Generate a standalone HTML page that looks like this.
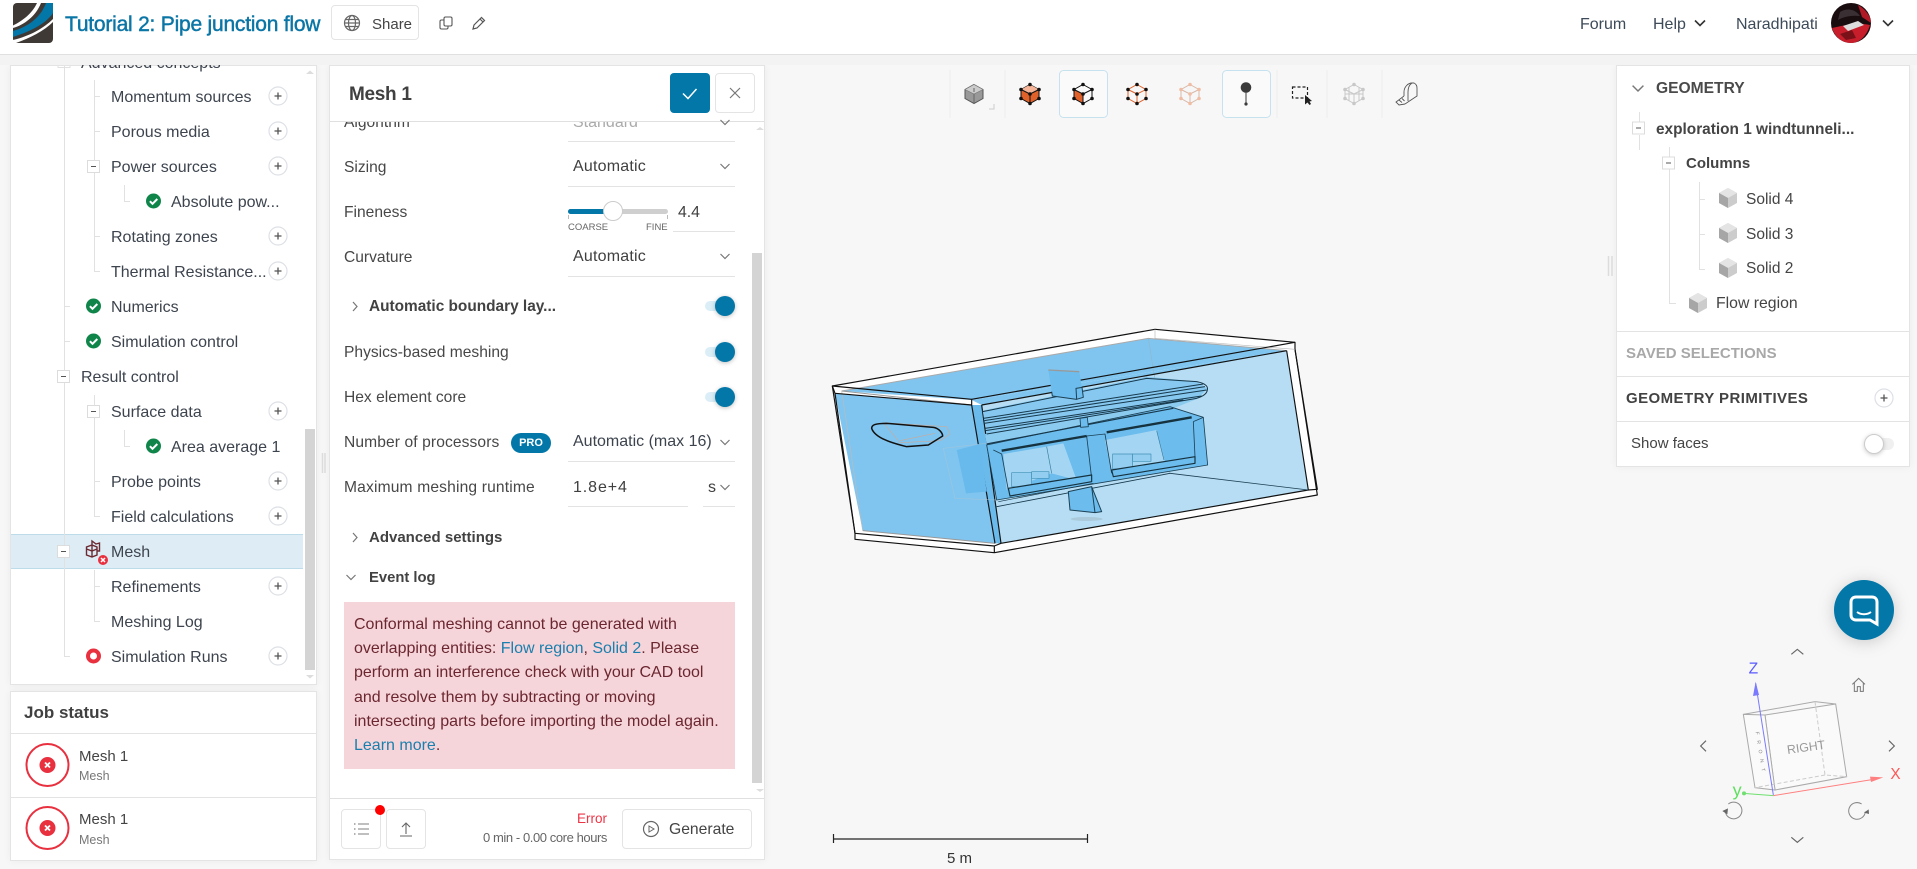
<!DOCTYPE html>
<html><head><meta charset="utf-8"><title>Tutorial 2: Pipe junction flow</title>
<style>
html,body{margin:0;padding:0}
body{width:1917px;height:864px;overflow:hidden;position:relative;background:#f7f7f7;font-family:"Liberation Sans",sans-serif;font-size:16px;color:#404040}
.p{position:absolute;background:#fff;border:1px solid #e4e4e4;box-sizing:border-box;z-index:1;box-shadow:0 0 8px rgba(0,0,0,.05)}
.t{position:absolute;line-height:20px;white-space:nowrap;z-index:2;margin-top:1px}
.top{z-index:6}
.r{color:#3d444e;margin-top:2px}
.b{font-weight:700}
.l{color:#474747;font-size:15.6px;margin-top:2px}
.h{position:absolute;z-index:4;background:#fff}
.btn{position:absolute;box-sizing:border-box;background:#fff;border:1px solid #e4e4e4;border-radius:4px;z-index:4}
.u{position:absolute;height:1px;background:#e3e3e3;z-index:2}
svg.o{position:absolute;left:0;top:0;z-index:5}
a{color:#1a7fae;text-decoration:none}
</style></head><body>

<!-- top bar -->
<div class="h" style="left:0;top:0;width:1917px;height:54px;border-bottom:1px solid #e0e0e0;box-sizing:content-box;z-index:4"></div>
<div class="h" style="left:0;top:55px;width:1917px;height:10px;background:#f3f3f3;z-index:3"></div>
<div class="t top" style="left:65px;top:14px;color:#0b76a6;font-size:21px;letter-spacing:-.22px;-webkit-text-stroke:.45px #0b76a6">Tutorial 2: Pipe junction flow</div>
<div class="btn" style="left:331px;top:5px;width:88px;height:35px"></div>
<div class="t top" style="left:372px;top:14px;font-size:15px;color:#444">Share</div>
<div class="t top" style="left:1580px;top:14px;font-size:16px;color:#3d4a58">Forum</div>
<div class="t top" style="left:1653px;top:14px;font-size:16px;color:#3d4a58">Help</div>
<div class="t top" style="left:1736px;top:14px;font-size:16px;color:#3d4a58">Naradhipati</div>

<!-- left tree panel -->
<div class="p" style="left:10px;top:65px;width:307px;height:620px"></div>
<div style="position:absolute;left:11px;top:534px;width:292px;height:35px;background:#deedf5;border-top:1px solid #bcdcea;border-bottom:1px solid #bcdcea;box-sizing:border-box;z-index:1"></div>
<div style="position:absolute;left:305px;top:429px;width:10px;height:241px;background:#d4d4d4;z-index:2"></div>

<div class="t r" style="left:81px;top:52px">Advanced concepts</div>
<div class="t r" style="left:111px;top:86px">Momentum sources</div>
<div class="t r" style="left:111px;top:121px">Porous media</div>
<div class="t r" style="left:111px;top:156px">Power sources</div>
<div class="t r" style="left:171px;top:191px">Absolute pow...</div>
<div class="t r" style="left:111px;top:226px">Rotating zones</div>
<div class="t r" style="left:111px;top:261px">Thermal Resistance...</div>
<div class="t r" style="left:111px;top:296px">Numerics</div>
<div class="t r" style="left:111px;top:331px">Simulation control</div>
<div class="t r" style="left:81px;top:366px">Result control</div>
<div class="t r" style="left:111px;top:401px">Surface data</div>
<div class="t r" style="left:171px;top:436px">Area average 1</div>
<div class="t r" style="left:111px;top:471px">Probe points</div>
<div class="t r" style="left:111px;top:506px">Field calculations</div>
<div class="t r" style="left:111px;top:541px">Mesh</div>
<div class="t r" style="left:111px;top:576px">Refinements</div>
<div class="t r" style="left:111px;top:611px">Meshing Log</div>
<div class="t r" style="left:111px;top:646px">Simulation Runs</div>

<!-- job status -->
<div class="p" style="left:10px;top:691px;width:307px;height:170px"></div>
<div class="u" style="left:11px;top:733px;width:305px"></div>
<div class="u" style="left:11px;top:797px;width:305px"></div>
<div class="t b" style="left:24px;top:702px;font-size:17px;color:#404040">Job status</div>
<div class="t" style="left:79px;top:746px;font-size:15px;color:#444">Mesh 1</div>
<div class="t" style="left:79px;top:765px;font-size:12.5px;color:#777">Mesh</div>
<div class="t" style="left:79px;top:809px;font-size:15px;color:#444">Mesh 1</div>
<div class="t" style="left:79px;top:829px;font-size:12.5px;color:#777">Mesh</div>

<!-- mesh panel -->
<div class="p" style="left:329px;top:65px;width:436px;height:795px"></div>
<div class="t l" style="left:344px;top:111px">Algorithm</div>
<div class="t" style="left:573px;top:112px;font-size:16px;color:#aaa">Standard</div>
<div class="h" style="left:330px;top:66px;width:434px;height:55px;border-bottom:1px solid #e0e0e0;z-index:3"></div>
<div class="t b top" style="left:349px;top:84px;font-size:19px;letter-spacing:-.3px;color:#404040">Mesh 1</div>
<div style="position:absolute;left:670px;top:73px;width:40px;height:40px;background:#0277a8;border-radius:4px;z-index:4"></div>
<div class="btn" style="left:715px;top:73px;width:40px;height:40px"></div>

<div style="position:absolute;left:752px;top:253px;width:10px;height:530px;background:#d4d4d4;z-index:2"></div>

<div class="t l" style="left:344px;top:156px">Sizing</div>
<div class="t" style="left:573px;top:156px;font-size:16px;letter-spacing:.2px">Automatic</div>
<div class="u" style="left:568px;top:141px;width:167px"></div>
<div class="u" style="left:568px;top:186px;width:167px"></div>
<div class="t l" style="left:344px;top:201px">Fineness</div>
<div class="t" style="left:568px;top:217px;font-size:9.5px;color:#666">COARSE</div>
<div class="t" style="left:646px;top:217px;font-size:9.5px;color:#666">FINE</div>
<div class="t" style="left:678px;top:202px;font-size:15.8px">4.4</div>
<div class="u" style="left:673px;top:231px;width:62px"></div>
<div class="t l" style="left:344px;top:246px">Curvature</div>
<div class="t" style="left:573px;top:246px;font-size:16px;letter-spacing:.2px">Automatic</div>
<div class="u" style="left:568px;top:276px;width:167px"></div>
<div class="t b" style="left:369px;top:296px;font-size:15.4px;color:#424242">Automatic boundary lay...</div>
<div class="t l" style="left:344px;top:341px">Physics-based meshing</div>
<div class="t l" style="left:344px;top:386px">Hex element core</div>
<div class="t l" style="left:344px;top:431px;letter-spacing:.1px">Number of processors</div>
<div style="position:absolute;left:511px;top:433px;width:40px;height:20px;border-radius:10px;background:#0277a8;color:#fff;font-size:11px;font-weight:700;line-height:20px;text-align:center;z-index:2">PRO</div>
<div class="t" style="left:573px;top:431px;font-size:16px;color:#3d444e">Automatic (max 16)</div>
<div class="u" style="left:568px;top:461px;width:167px"></div>
<div class="t l" style="left:344px;top:476px;letter-spacing:.16px">Maximum meshing runtime</div>
<div class="t" style="left:573px;top:477px;font-size:16px;letter-spacing:.9px">1.8e+4</div>
<div class="t" style="left:708px;top:477px;font-size:16px">s</div>
<div class="u" style="left:568px;top:506px;width:120px"></div>
<div class="u" style="left:703px;top:506px;width:32px"></div>
<div class="t b" style="left:369px;top:527px;font-size:15px;color:#424242">Advanced settings</div>
<div class="t b" style="left:369px;top:567px;font-size:14.8px;color:#424242">Event log</div>

<div style="position:absolute;left:344px;top:602px;width:391px;height:167px;background:#f5d5d9;z-index:1"></div>
<div class="t" style="left:354px;top:614px;font-size:16px;color:#6b2630">Conformal meshing cannot be generated with</div>
<div class="t" style="left:354px;top:638px;font-size:16px;color:#6b2630">overlapping entities: <a>Flow region</a>, <a>Solid 2</a>. Please</div>
<div class="t" style="left:354px;top:662px;font-size:16px;color:#6b2630">perform an interference check with your CAD tool</div>
<div class="t" style="left:354px;top:687px;font-size:16px;color:#6b2630">and resolve them by subtracting or moving</div>
<div class="t" style="left:354px;top:711px;font-size:16px;color:#6b2630">intersecting parts before importing the model again.</div>
<div class="t" style="left:354px;top:735px;font-size:16px;color:#6b2630"><a>Learn more</a>.</div>

<div class="u" style="left:330px;top:798px;width:434px;background:#e0e0e0"></div>
<div class="btn" style="left:341px;top:809px;width:40px;height:40px;z-index:2"></div>
<div class="btn" style="left:386px;top:809px;width:40px;height:40px;z-index:2"></div>
<div class="t" style="right:1310px;top:808px;font-size:13.5px;color:#ee3344">Error</div>
<div class="t" style="right:1310px;top:827px;font-size:13px;color:#666;letter-spacing:-.42px">0 min - 0.00 core hours</div>
<div class="btn" style="left:622px;top:809px;width:130px;height:40px;z-index:2"></div>
<div class="t" style="left:669px;top:819px;font-size:15.7px;color:#444">Generate</div>

<!-- right panel -->
<div class="p" style="left:1616px;top:65px;width:294px;height:402px"></div>
<div class="t" style="left:1656px;top:78px;font-size:15.6px;font-weight:700;color:#4a4a4a">GEOMETRY</div>
<div class="t b" style="left:1656px;top:119px;font-size:15.4px;color:#444">exploration 1 windtunneli...</div>
<div class="t b" style="left:1686px;top:153px;font-size:15px;color:#444">Columns</div>
<div class="t" style="left:1746px;top:189px;font-size:15.5px;color:#444">Solid 4</div>
<div class="t" style="left:1746px;top:224px;font-size:15.5px;color:#444">Solid 3</div>
<div class="t" style="left:1746px;top:258px;font-size:15.5px;color:#444">Solid 2</div>
<div class="t" style="left:1716px;top:293px;font-size:15.8px;color:#444">Flow region</div>
<div class="u" style="left:1617px;top:331px;width:292px"></div>
<div class="t b" style="left:1626px;top:343px;font-size:15px;color:#a8a8a8">SAVED SELECTIONS</div>
<div class="u" style="left:1617px;top:376px;width:292px"></div>
<div class="t b" style="left:1626px;top:388px;font-size:15px;color:#424242;letter-spacing:.43px">GEOMETRY PRIMITIVES</div>
<div class="u" style="left:1617px;top:421px;width:292px"></div>
<div class="t" style="left:1631px;top:433px;font-size:15px;color:#444">Show faces</div>

<!-- scale label -->
<div class="t" style="left:947px;top:848px;font-size:15px;color:#333">5 m</div>

<svg class="o" width="1917" height="864" viewBox="0 0 1917 864" xmlns="http://www.w3.org/2000/svg" fill="none">
<defs>
<g id="plus"><circle r="9" fill="#fff" stroke="#dde0e6" stroke-width="1.2"/><path d="M-3.5 0H3.5M0-3.5V3.5" stroke="#555" stroke-width="1.3"/></g>
<g id="ok"><circle r="7.5" fill="#10854a"/><path d="M-3.6 .2L-1 2.8 3.8-2" stroke="#fff" stroke-width="2"/></g>
<g id="tog"><rect x="-6" y="-6" width="12" height="12" fill="#fff" stroke="#dcdcdc"/><path d="M-2.5 0H2.5" stroke="#555"/></g>
<g id="chev"><path d="M-4.5-2L0 2.5 4.5-2" stroke="#777" stroke-width="1.2"/></g>
<g id="chevd"><path d="M-5-2.500L0 2.500 5-2.500" stroke="#333" stroke-width="1.600"/></g>
<g id="tg"><rect x="-20" y="-5" width="22" height="10" rx="5" fill="#dbeef7"/><circle r="10" fill="#0277a8" style="filter:drop-shadow(0 1px 2px rgba(0,0,0,.25))"/></g>
<g id="cube"><path d="M0-10L9-5V5L0 10-9 5V-5Z" fill="#ccc"/><path d="M0-10L9-5 0 0-9-5Z" fill="#e4e4e4"/><path d="M-9-5L0 0V10L-9 5Z" fill="#a6a6a6"/></g>
<g id="jobx"><circle r="21" fill="#fff" stroke="#e8303f" stroke-width="2"/><circle r="8" fill="#e8303f"/><path d="M-2.5-2.5L2.5 2.5M2.5-2.5L-2.5 2.5" stroke="#fff" stroke-width="1.8"/></g>
</defs>

<!-- logo -->
<rect x="13" y="3" width="40" height="40" rx="4" fill="#3f3935"/>
<path d="M46 3H53V13C45 25 28 32 13 37V31C28 27 41 17 46 3Z" fill="#0277a8"/>
<path d="M37 3H41C36 16 24 25 13 28V25.500C22 21 32 14 37 3Z" fill="#fff"/>
<path d="M13 40C30 36 44 28 53 19V22C44 31 30 38 16 43H13Z" fill="#fff"/>

<!-- header icons -->
<g stroke="#666" stroke-width="1.2"><circle cx="352" cy="23" r="7.5"/><ellipse cx="352" cy="23" rx="3.500" ry="7.5"/><path d="M344.500 23H359.500M345.500 19.500H358.500M345.500 26.500H358.500"/></g>
<g stroke="#555" stroke-width="1.1"><rect x="440" y="20" width="8" height="9" rx="1.500" fill="#fff"/><rect x="444" y="17" width="8" height="9" rx="1.500" fill="#fff"/></g>
<path d="M473 29L474 25 481.500 17.500 484.500 20.500 477 28 473 29ZM480 19L483 22" stroke="#555" stroke-width="1.2"/>
<use href="#chevd" transform="translate(1700,23)"/>
<use href="#chevd" transform="translate(1888,23)"/>
<circle cx="1851" cy="23" r="20" fill="#1a0d10"/>
<path d="M1832 28C1842 26 1856 22 1870 25 1866 38 1858 43 1851 43 1842 43 1835 37 1832 28Z" fill="#c81e2c"/>
<path d="M1858 5C1865 9 1871 16 1871 23L1862 17Z" fill="#b01a26"/>
<path d="M1843 26L1858 21 1864 25 1848 31Z" fill="#ddd"/>
<path d="M1840 34L1852 30 1856 38 1846 40Z" fill="#7a1018"/>
<path d="M1840 12C1848 7 1856 10 1860 16 1850 15 1843 17 1838 20Z" fill="#3a3034"/>

<!-- left tree lines -->
<g stroke="#e1e1e1">
<path d="M64.500 66V656.500H70M64.500 306.500H70M64.500 341.500H70"/>
<path d="M94.500 80V271.500H100M94.500 96.500H100M94.500 131.500H100M94.500 236.500H100"/>
<path d="M124.500 185V201.500H130"/>
<path d="M94.500 395V516.500H100M94.500 481.500H100"/>
<path d="M124.500 430V446.500H130"/>
<path d="M94.500 570V621.500H100M94.500 586.500H100"/>
<path d="M58 66V67.500H70V66"/>
</g>
<use href="#tog" transform="translate(93.500,166.500)"/>
<use href="#tog" transform="translate(63.500,376.500)"/>
<use href="#tog" transform="translate(93.500,411.500)"/>
<use href="#tog" transform="translate(63.500,551.500)"/>
<use href="#plus" transform="translate(278,96)"/>
<use href="#plus" transform="translate(278,131)"/>
<use href="#plus" transform="translate(278,166)"/>
<use href="#plus" transform="translate(278,236)"/>
<use href="#plus" transform="translate(278,271)"/>
<use href="#plus" transform="translate(278,411)"/>
<use href="#plus" transform="translate(278,481)"/>
<use href="#plus" transform="translate(278,516)"/>
<use href="#plus" transform="translate(278,586)"/>
<use href="#plus" transform="translate(278,656)"/>
<use href="#ok" transform="translate(153.500,201)"/>
<use href="#ok" transform="translate(93.500,306)"/>
<use href="#ok" transform="translate(93.500,341)"/>
<use href="#ok" transform="translate(153.500,446)"/>
<circle cx="93.500" cy="656" r="5.500" fill="#fff" stroke="#e8303f" stroke-width="4"/>
<path d="M86.500 555V547L92 545 97 547V555L92 557ZM92 545V557M86.500 549L92 551 97 549M92 545V541L96 544 99.500 543V551H97" stroke="#6b2a33" stroke-width="1.400"/>
<circle cx="103" cy="560" r="5" fill="#e8303f"/><path d="M101 558L105 562M105 558L101 562" stroke="#fff" stroke-width="1.500"/>
<path d="M306 74H314L310 70.500Z M306 675H314L310 678.500Z" fill="#ddd"/>
<use href="#jobx" transform="translate(47.500,765)"/>
<use href="#jobx" transform="translate(47.500,828)"/>
<path d="M322.500 453V473M325 453V473" stroke="#dcdcdc" stroke-width="1.500"/>

<!-- mesh panel icons -->
<path d="M683 93.500L688 98.500 696.500 89" stroke="#fff" stroke-width="1.500"/>
<path d="M730 88L740 98M740 88L730 98" stroke="#777" stroke-width="1.200"/>
<use href="#chev" transform="translate(725,122)"/>
<use href="#chev" transform="translate(725,166)"/>
<use href="#chev" transform="translate(725,256)"/>
<use href="#chev" transform="translate(725,442)"/>
<use href="#chev" transform="translate(725,487)"/>
<path d="M756 130H764L760 127Z M756 789H764L760 792Z" fill="#ddd"/>
<!-- slider -->
<rect x="568" y="209" width="100" height="5" rx="2.500" fill="#cfcfcf"/>
<rect x="568" y="209" width="45" height="5" rx="2.500" fill="#0277a8"/>
<path d="M568.500 215V219M667.500 215V219" stroke="#bbb"/>
<circle cx="613" cy="211" r="9.500" fill="#fff" stroke="#ccc"/>
<use href="#tg" transform="translate(725,306)"/>
<use href="#tg" transform="translate(725,352)"/>
<use href="#tg" transform="translate(725,397)"/>
<path d="M353 302L357 306.500 353 311" stroke="#777" stroke-width="1.200"/>
<path d="M353 533L357 537.500 353 542" stroke="#777" stroke-width="1.200"/>
<use href="#chev" transform="translate(351,577)"/>
<!-- bottom -->
<circle cx="380" cy="810" r="5" fill="#f00"/>
<path d="M358 824H369M358 829H369M358 834H369" stroke="#aaa" stroke-width="1.400"/>
<path d="M354 824H355.500M354 829H355.500M354 834H355.500" stroke="#999" stroke-width="1.400"/>
<path d="M406 834V823M402 827L406 823 410 827M400 836H412" stroke="#666" stroke-width="1.100"/>
<circle cx="651" cy="829" r="7.500" stroke="#666" stroke-width="1.200"/><path d="M649 826L654 829 649 832Z" stroke="#666"/>

<!-- toolbar -->
<g stroke="#ececec"><path d="M950 70V118M1005 70V118M1277 70V118M1327 70V118M1382 70V118"/></g>
<rect x="1059.500" y="70.500" width="48" height="47" rx="4" fill="#fafafa" stroke="#c6e2ef"/>
<rect x="1222.500" y="70.500" width="48" height="47" rx="4" fill="#fafafa" stroke="#c6e2ef"/>
<g transform="translate(974,94)"><path d="M0-9.500L9-4.500V4.500L0 9.500-9 4.500V-4.500Z" fill="#999" stroke="#555"/><path d="M0-9.500L9-4.500 0 0-9-4.500Z" fill="#ccc" stroke="#777" stroke-width=".6"/><path d="M0 0V9.500M0-6V-2" stroke="#666"/></g>
<path d="M989 109H994V104" stroke="#ccc"/>
<g transform="translate(1030,94)"><path d="M0-9.500L9-4.500V4.500L0 9.500-9 4.500V-4.500Z" fill="#e0622a" stroke="#111"/><path d="M0-9.500L9-4.500 0 0-9-4.500Z" fill="#f5b497"/><path d="M0 0V9.500M0 0L9-4.500M0 0L-9-4.500" stroke="#111"/><g fill="#111"><circle cy="-9.500" r="1.800"/><circle cx="9" cy="-4.500" r="1.800"/><circle cx="9" cy="4.500" r="1.800"/><circle cy="9.500" r="1.800"/><circle cx="-9" cy="4.500" r="1.800"/><circle cx="-9" cy="-4.500" r="1.800"/><circle r="1.800"/></g></g>
<g transform="translate(1083,94)"><path d="M-9-4.500L0 0V9.500L-9 4.500Z" fill="#e0622a"/><path d="M0-9.500L9-4.500V4.500L0 9.500-9 4.500V-4.500ZM0 0V9.500M0 0L9-4.500M0 0L-9-4.500" stroke="#111"/><g fill="#111"><circle cy="-9.500" r="1.800"/><circle cx="9" cy="-4.500" r="1.800"/><circle cx="9" cy="4.500" r="1.800"/><circle cy="9.500" r="1.800"/><circle cx="-9" cy="4.500" r="1.800"/><circle cx="-9" cy="-4.500" r="1.800"/><circle r="1.800"/></g></g>
<g transform="translate(1137,94)"><path d="M0-9.500L9-4.500V4.500L0 9.500-9 4.500V-4.500ZM0 0V9.500M0 0L9-4.500M0 0L-9-4.500" stroke="#e0622a"/><g fill="#111"><circle cy="-9.500" r="1.800"/><circle cx="9" cy="-4.500" r="1.800"/><circle cx="9" cy="4.500" r="1.800"/><circle cy="9.500" r="1.800"/><circle cx="-9" cy="4.500" r="1.800"/><circle cx="-9" cy="-4.500" r="1.800"/><circle r="1.800"/></g></g>
<g transform="translate(1190,94)"><path d="M0-9.500L9-4.500V4.500L0 9.500-9 4.500V-4.500ZM0 0V9.500M0 0L9-4.500M0 0L-9-4.500" stroke="#d8b9aa"/><g fill="#f0bda4"><circle cy="-9.500" r="1.800"/><circle cx="9" cy="-4.500" r="1.800"/><circle cx="9" cy="4.500" r="1.800"/><circle cy="9.500" r="1.800"/><circle cx="-9" cy="4.500" r="1.800"/><circle cx="-9" cy="-4.500" r="1.800"/><circle r="1.800"/></g></g>
<circle cx="1246" cy="87.500" r="5.300" fill="#3a3a3a"/><path d="M1246 92V104" stroke="#3a3a3a"/><circle cx="1246" cy="104" r="1.600" fill="#3a3a3a"/>
<rect x="1292.500" y="87" width="15" height="11" stroke="#222" stroke-width="1.200" stroke-dasharray="3 2"/>
<path d="M1305 95V104.500L1307.500 102.500 1309.500 105 1311 104 1309.500 101.500 1312 101Z" fill="#222"/>
<g transform="translate(1354,94)" stroke="#c8c8c8"><path d="M0-9.500L9-4.500V4.500L0 9.500-9 4.500V-4.500ZM0 0V9.500M0 0L9-4.500M0 0L-9-4.500M-5-7L-5 7M5-7V7M-9 0L9 0"/><g fill="#c8c8c8" stroke="none"><circle cy="-9.500" r="1.800"/><circle cx="9" cy="-4.500" r="1.800"/><circle cx="9" cy="4.500" r="1.800"/><circle cy="9.500" r="1.800"/><circle cx="-9" cy="4.500" r="1.800"/><circle cx="-9" cy="-4.500" r="1.800"/></g></g>
<path d="M1404 96V92C1404 87 1408 83 1412 83H1414C1416 84 1417 86 1417 88V96L1405 104M1412 83C1409 85 1408 89 1408 92V101M1404 96L1396 102 1399 105 1405 104M1399 100L1402 102.500M1402 98.500L1404.500 101" stroke="#555" stroke-width=".9"/>

<!-- 3D model -->
<g transform="translate(800,310) scale(.33333)" stroke-linejoin="round">
<path d="M97 228L1065 58 1485 97V118L1552 555 583 728 165 688V670Z" fill="#fff" stroke="#111" stroke-width="3.500"/>
<path d="M125 243L1045 85 1460 122 515 270Z" fill="#80c5ef"/>
<path d="M105 250L515 285 585 700 188 662Z" fill="#80c5ef"/>
<path d="M545 285L1460 122 1525 540 603 700Z" fill="#b6ddf3"/>
<path d="M515 285L545 285 603 700 585 700Z" fill="#6abaeb"/>
<path d="M545 285L515 270 1460 122Z" fill="#80c5ef"/>
<path d="M125 243L1045 85 1460 122" stroke="#aaa" stroke-width="3"/>
<path d="M1065 58V85L1485 118" stroke="#bbb" stroke-width="2"/>
<path d="M125 243L515 285M188 662L585 700" stroke="#999" stroke-width="3"/>
<path d="M125 243L188 662" stroke="#bbb" stroke-width="2"/>
<path d="M1045 85L1110 490" stroke="#8fb8cf" stroke-width="2"/>
<!-- frame lines -->
<g stroke="#111" stroke-width="3.500">
<path d="M97 228L105 250 515 285V268L97 228"/>
<path d="M515 268L1485 97"/>
<path d="M545 285L1460 122"/>
<path d="M1460 122L1525 540 1552 538 1485 118"/>
<path d="M515 285L585 700M545 285L603 700"/>
<path d="M603 700L1525 540"/>
<path d="M105 250L165 670 583 708V728M583 708L603 700"/>
<path d="M1110 490L1525 540" stroke="#1c3e52" stroke-width="2.500"/>
</g>
<!-- ghost box -->
<path d="M430 415L560 400 590 570 465 565Z" stroke="#a8c5d5" stroke-width="2" opacity=".7"/>
<path d="M470 420L540 402 560 545 498 550Z" fill="#68baed"/>
<!-- oval -->
<path d="M250 338L440 350 450 372 420 392 300 398Z" stroke="#c8aa9c" stroke-width="2"/>
<path d="M215 355C215 345 225 340 260 340L400 352C415 354 428 368 428 378L385 405 320 410C280 400 225 385 215 355Z" stroke="#111" stroke-width="4.500"/>
<path d="M300 392L405 370" stroke="#c8aa9c" stroke-width="2"/>
<!-- wing -->
<path d="M555 372L1195 265 1120 295 560 405Z" fill="#8ccbf0"/>
<path d="M548 302L1040 200 1190 215 1222 235 1195 265 560 372Z" fill="#86c8f0"/>
<g stroke="#17384b" stroke-width="3">
<path d="M548 305L1040 205 1190 215C1215 220 1225 228 1222 240 1220 255 1200 262 1190 265L560 372"/>
<path d="M550 325L1210 222M552 340L1220 240M555 355L1205 258M553 332L1215 230M556 362L1150 270"/>
</g>
<!-- lower body -->
<path d="M560 405L1110 290 1210 322 1223 465 590 570Z" fill="#6cbced" stroke="#1c4054" stroke-width="2.500"/>
<path d="M610 432L740 410 755 490 620 540Z" fill="#a4d6f3"/>
<path d="M740 410L790 400 830 510 755 490Z" fill="#a4d6f3"/>
<path d="M915 390L1070 360 1095 455 935 490Z" fill="#a4d6f3"/>
<path d="M580 420L605 432 625 540M860 378L875 505M860 378L915 372 935 490M1180 335L1185 440M1180 335L1210 322" stroke="#1c4054" stroke-width="2.500"/>
<path d="M740 410L755 490M1070 362L1092 450" stroke="#3a7d9e" stroke-width="2"/>
<path d="M605 422L860 378M920 367L1175 322" stroke="#16323f" stroke-width="7"/>
<path d="M560 402L830 350 1120 295" stroke="#17384b" stroke-width="3.500"/>
<!-- components -->
<g stroke="#3f8fb5" stroke-width="2" fill="#93cdf0"><rect x="635" y="488" width="60" height="42"/><rect x="695" y="485" width="52" height="20"/><rect x="938" y="432" width="60" height="45"/><rect x="998" y="432" width="55" height="22"/></g>
<path d="M625 535L875 495V515L630 558Z" fill="#6cbced" stroke="#16323f" stroke-width="3.500"/>
<path d="M935 480L1185 440V460L940 500Z" fill="#6cbced" stroke="#16323f" stroke-width="3.500"/>
<path d="M590 590L1110 490" stroke="#17384b" stroke-width="2.500"/>
<path d="M595 575L880 520" stroke="#17384b" stroke-width="2"/>
<!-- blocks -->
<path d="M805 545L875 530 905 605 885 608 810 600Z" fill="#6cbced" stroke="#1c4054" stroke-width="3"/><path d="M875 530L885 608" stroke="#1c4054" stroke-width="3"/>
<path d="M745 180L838 185 850 262 830 268 757 258Z" fill="#6cbced"/><path d="M745 180L838 185" stroke="#999" stroke-width="4"/><path d="M755 245L757 258 830 268 850 262 846 232 828 235 830 268" stroke="#1c4054" stroke-width="3"/>
<path d="M840 325L862 322 865 350 842 352Z" fill="#6cbced" stroke="#1c4054" stroke-width="2.500"/>
<ellipse cx="860" cy="627" rx="48" ry="6" fill="#a8c4d4" opacity=".8"/>
</g>

<!-- scale bar -->
<path d="M833.500 834V843M1087.500 834V843M833 839H1088" stroke="#222" stroke-width="1.200"/>

<!-- right panel icons -->
<path d="M1608.500 256V276M1612 256V276" stroke="#dcdcdc" stroke-width="1.500"/>
<use href="#chev" transform="translate(1638,88) scale(1.2)"/>
<g stroke="#e1e1e1"><path d="M1639.500 112V122M1639.500 135V150"/><path d="M1669.500 147V303.500H1676"/><path d="M1699.500 182V269.500H1705M1699.500 199.500H1705M1699.500 234.500H1705"/></g>
<use href="#tog" transform="translate(1638.500,128)"/>
<use href="#tog" transform="translate(1668.500,163)"/>
<use href="#cube" transform="translate(1728,198)"/>
<use href="#cube" transform="translate(1728,233)"/>
<use href="#cube" transform="translate(1728,268)"/>
<use href="#cube" transform="translate(1698,303)"/>
<use href="#plus" transform="translate(1884,398)"/>
<rect x="1872" y="438" width="22" height="12" rx="6" fill="#f0f0f0"/>
<circle cx="1874" cy="444" r="9.500" fill="#fff" stroke="#ccc" style="filter:drop-shadow(0 1px 2px rgba(0,0,0,.2))"/>

<!-- chat -->
<circle cx="1864" cy="610" r="30" fill="#0277a8" style="filter:drop-shadow(0 2px 8px rgba(0,0,0,.18))"/>
<path d="M1856 597H1872C1875 597 1877 599 1877 602V624L1870 620H1856C1853 620 1851 618 1851 615V602C1851 599 1853 597 1856 597Z" stroke="#fff" stroke-width="3"/>
<path d="M1857 612C1861 615 1867 615 1871 612" stroke="#fff" stroke-width="2"/>

<!-- axis widget -->
<g transform="translate(1660,630) scale(.33333)">
<path d="M394 73L412 58 430 73M394 622L412 637 430 622M138 332L122 348 138 364M687 332L703 348 687 364" stroke="#666" stroke-width="3.500"/>
<path d="M577 163L596 145 615 163M583 158V184H592V170H601V184H610V158" stroke="#777" stroke-width="3"/>
<path d="M205 522A25 25 0 1 1 196 545" stroke="#888" stroke-width="3"/><path d="M187 543L204 535 202 553Z" fill="#666"/>
<path d="M615 522A25 25 0 1 0 626 545" stroke="#888" stroke-width="3" transform="translate(-10,0)"/><path d="M626 538L612 548 627 552Z" fill="#666"/>
<path d="M315 255L527 222 560 440 345 480Z" fill="#fafafa" stroke="#aaa" stroke-width="3"/>
<path d="M250 253L315 255 345 480 285 473Z" fill="#fafafa" stroke="#aaa" stroke-width="3"/>
<path d="M250 253L465 215 527 222" stroke="#aaa" stroke-width="3"/>
<path d="M465 215L495 435 560 440M495 435L285 473" stroke="#ccc" stroke-width="3" stroke-dasharray="12 7"/>
<text transform="translate(383,372) rotate(-8)" font-family="Liberation Sans, sans-serif" font-size="37" fill="#999">RIGHT</text>
<text transform="translate(287,306) rotate(81)" font-family="Liberation Sans, sans-serif" font-size="15" fill="#888" textLength="120">FRONT</text>
<path d="M340 495L287 160" stroke="#7a7aff" stroke-width="3"/><path d="M287 155L279 198 297 195Z" fill="#7a7aff"/>
<path d="M340 497L640 448" stroke="#ff8080" stroke-width="3"/><path d="M670 442L630 440 633 456Z" fill="#ff8080"/>
<path d="M340 497L250 490" stroke="#6fe06f" stroke-width="3"/><circle cx="252" cy="490" r="6" fill="#6fe06f"/>
<text x="266" y="130" font-family="Liberation Sans, sans-serif" font-size="47" fill="#5b5bff">Z</text>
<text x="691" y="447" font-family="Liberation Sans, sans-serif" font-size="46" fill="#ff5555">X</text>
<text x="218" y="498" font-family="Liberation Sans, sans-serif" font-size="54" fill="#5fe05f">y</text>
</g>
</svg>
</body></html>
